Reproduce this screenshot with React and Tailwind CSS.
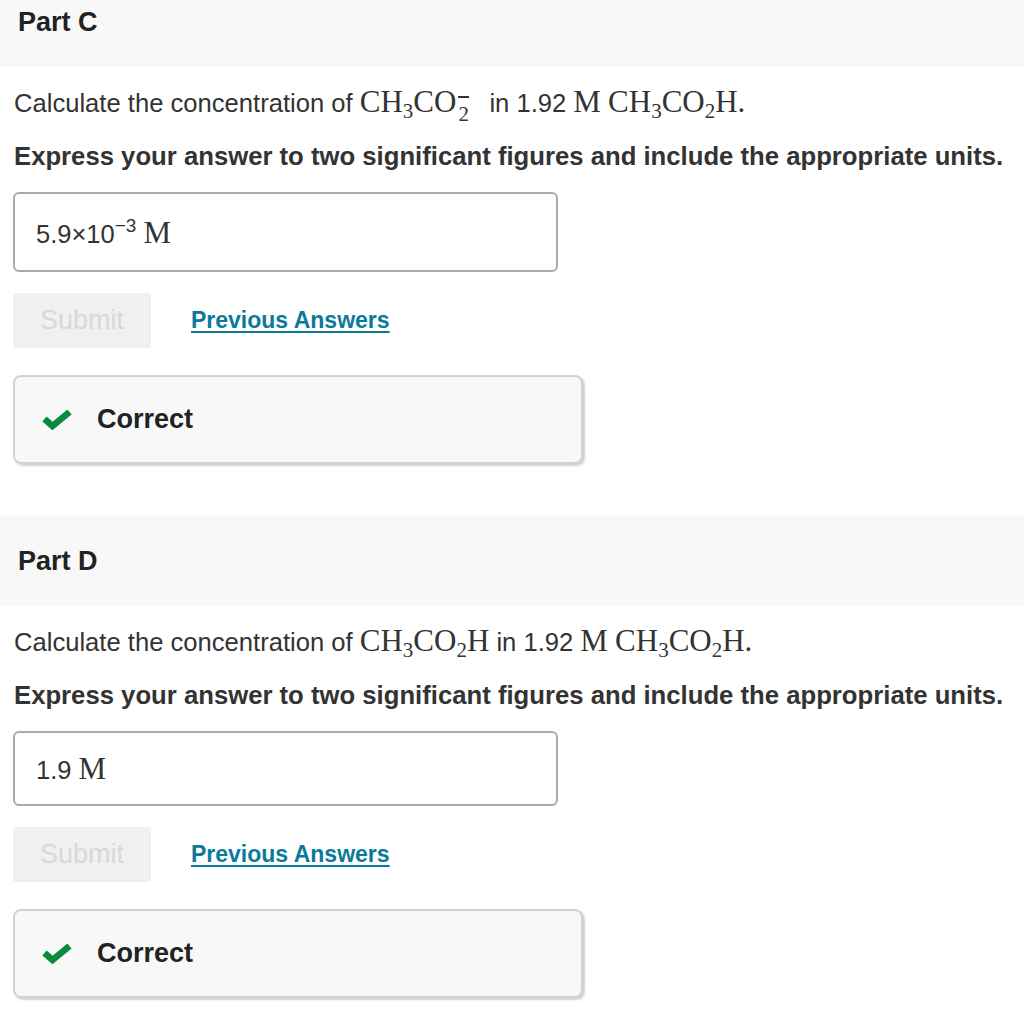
const sans = "font-['Liberation_Sans',Arial,sans-serif]";
const serif = "font-['Liberation_Serif','Times_New_Roman',serif]";

const M = ({ children }) => (
    <span className={`${serif} text-[31px] leading-none`}>{children}</span>
);

const Sub = ({ children }) => (
    <span className="text-[21px] relative top-[6px] leading-none">{children}</span>
);

const Acid = () => (
    <M>
        CH<Sub>3</Sub>CO<Sub>2</Sub>H
    </M>
);

// CO2 with a stacked charge: the minus bar sits above the subscript 2
const Acetate = () => (
    <M>
        CH<Sub>3</Sub>CO
        <span className="inline-block relative w-[15px] h-[10px] ml-[1px] mr-[17px] text-[21px]">
            <span className="absolute left-[1px] -top-[6px] w-[11px] h-[1.5px] bg-[#333]" />
            <span className="absolute left-[1px] top-[5.5px] leading-[12px]">2</span>
        </span>
    </M>
);

const Check = () => (
    <svg width="30" height="20" viewBox="0 0 30 20" className="shrink-0">
        <polyline
            points="2.5,9 10.5,16 27.5,2"
            fill="none"
            stroke="#0b893c"
            strokeWidth="6.5"
            strokeLinejoin="miter"
        />
    </svg>
);

const Part = ({ title, first, question, answer, boxHeight }) => (
    <section>
        <div className={`bg-[#f8f8f8] px-[18px] pb-[29px] ${first ? "pt-[7px]" : "pt-[30px]"}`}>
            <h2 className="text-[27px] leading-[31px] font-bold text-[#222]">{title}</h2>
        </div>

        <div className="px-[13px]">
            <p className="mt-[19px] text-[25.6px] leading-[32px] text-[#333] pl-[1px]">{question}</p>
            <p className="mt-[21px] text-[25.7px] leading-[32px] font-bold text-[#333] pl-[1px]">
                Express your answer to two significant figures and include the appropriate units.
            </p>

            <div
                className={`mt-[20px] w-[545px] flex items-center rounded-[6px] border-2 border-[#ababab] bg-white px-[21px] ${boxHeight}`}
            >
                <span className="text-[25.5px] leading-none text-[#333]">{answer}</span>
            </div>

            <div className="mt-[21px] flex items-center gap-[40px]">
                <button className="w-[138px] h-[55px] rounded-[3px] bg-[#f0f0f0] text-[27px] text-[#d8d8d8]">
                    Submit
                </button>
                <a href="#" className="text-[23px] font-bold text-[#0a7a9c] underline underline-offset-[3px] decoration-2">
                    Previous Answers
                </a>
            </div>

            <div className="mt-[27px] w-[570px] h-[89px] flex items-center gap-[25px] rounded-[8px] border-2 border-[#d2d2d2] bg-[#f8f8f8] pl-[27px] shadow-[2px_2px_2px_rgba(0,0,0,0.18)]">
                <Check />
                <span className="text-[27px] font-bold text-[#222]">Correct</span>
            </div>
        </div>
    </section>
);

export default function App() {
    return (
        <div className={`${sans} w-[1024px] min-h-[1012px] bg-white`}>
            <Part
                first
                title="Part C"
                boxHeight="h-[80px]"
                question={
                    <>
                        Calculate the concentration of <Acetate />in 1.92 <M>M</M> <Acid />
                        <M>.</M>
                    </>
                }
                answer={
                    <>
                        5.9×10<sup className="text-[19px] relative -top-[11px]">&#8722;3</sup>{" "}
                        <M>M</M>
                    </>
                }
            />
            <div className="h-[52px]" />
            <Part
                title="Part D"
                boxHeight="h-[75px]"
                question={
                    <>
                        Calculate the concentration of <Acid /> in 1.92 <M>M</M> <Acid />
                        <M>.</M>
                    </>
                }
                answer={
                    <>
                        1.9 <M>M</M>
                    </>
                }
            />
        </div>
    );
}
